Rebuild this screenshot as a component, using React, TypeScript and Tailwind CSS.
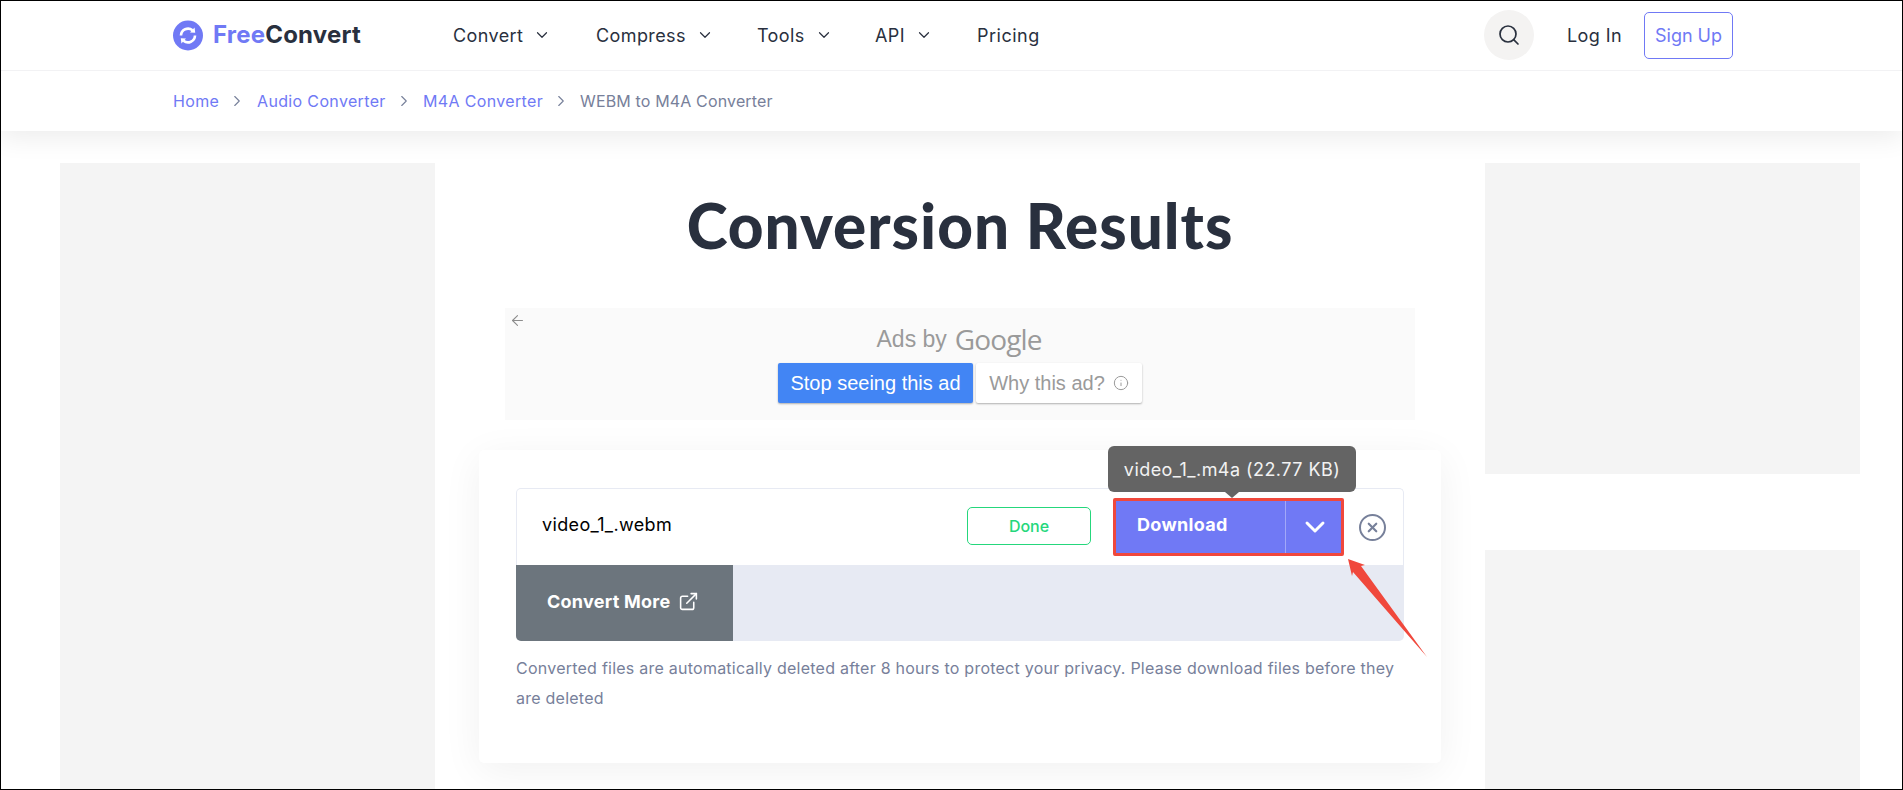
import { ChevronDown, ChevronRight, Search, ExternalLink, ArrowLeft, Info, X } from "lucide-react";

const navItems = [
  { label: "Convert", className: "w-[143px]" },
  { label: "Compress", className: "w-[161px]" },
  { label: "Tools", className: "w-[118px]" },
  { label: "API", className: "w-[102px]" },
];

const crumbs = [
  { label: "Home", className: "w-[84px]" },
  { label: "Audio Converter", className: "w-[166px]" },
  { label: "M4A Converter", className: "w-[157px]" },
];

function Logo() {
  return (
    <div className="flex items-center gap-[10px] w-[280px]">
      <svg width="30" height="31" viewBox="0 0 30 31" className="shrink-0">
        <circle cx="15" cy="15.5" r="15" fill="#7079f5" />
        <path d="M8 15.5a7 7 0 0 1 11.5-5.2" fill="none" stroke="#fff" strokeWidth="2.6" />
        <path d="M22 15.5a7 7 0 0 1-11.5 5.2" fill="none" stroke="#fff" strokeWidth="2.6" />
        <path d="M17 12.5l5.2.2-.6-5.2z" fill="#fff" />
        <path d="M13 18.5l-5.2-.2.6 5.2z" fill="#fff" />
      </svg>
      <span className="text-[24px] font-bold leading-none tracking-[0.2px]">
        <span className="text-[#7079f5]">Free</span>
        <span className="text-[#29303e]">Convert</span>
      </span>
    </div>
  );
}

function Header() {
  return (
    <header className="relative z-10 bg-white shadow-[0_8px_24px_rgba(0,0,0,0.07)]">
      <div className="h-[71px] flex items-center pl-[173px] border-b border-[#f2f2f4]">
        <Logo />
        {navItems.map((item) => (
          <div key={item.label} className={`flex items-center gap-[10px] text-[18px] tracking-[0.4px] text-[#29303e] ${item.className}`}>
            {item.label}
            <ChevronDown size={18} strokeWidth={1.6} />
          </div>
        ))}
        <div className="text-[18px] tracking-[0.5px] text-[#29303e]">Pricing</div>
        <div className="ml-auto flex items-center mr-[170px]">
          <div className="w-[50px] h-[50px] rounded-full bg-[#f4f3f2] flex items-center justify-center">
            <Search size={24} strokeWidth={1.7} className="text-[#29303e]" />
          </div>
          <span className="ml-[33px] text-[18px] tracking-[0.4px] text-[#29303e]">Log In</span>
          <div className="ml-[22px] w-[89px] h-[47px] rounded-[5px] border border-[#7079f5] text-[#7079f5] text-[18px] flex items-center justify-center">
            Sign Up
          </div>
        </div>
      </div>
      <div className="h-[60px] flex items-center pl-[173px] text-[16px] tracking-[0.35px] text-[#7079f5]">
        {crumbs.map((crumb) => (
          <div key={crumb.label} className={`flex items-center ${crumb.className}`}>
            <span>{crumb.label}</span>
            <ChevronRight size={18} strokeWidth={1.5} className="ml-[9px] text-[#77809a]" />
          </div>
        ))}
        <span className="text-[#77809a] tracking-[0.15px]">WEBM to M4A Converter</span>
      </div>
    </header>
  );
}

function AdNotice() {
  return (
    <div className="relative mx-[26px] h-[112px] bg-[#fafafa] flex flex-col items-center pt-[14px] font-['Liberation_Sans',sans-serif]">
      <ArrowLeft size={17} strokeWidth={1.5} className="absolute left-[4px] top-[4px] text-[#8c8c8c]" />
      <div className="h-[34px] flex items-center gap-[8px] pr-[2px] text-[#9a9a9a]">
        <span className="text-[23px]">Ads by</span>
        <span className="text-[28px] font-medium font-['Open_Sans',sans-serif] tracking-[-0.9px]">Google</span>
      </div>
      <div className="mt-[7px] flex gap-[3px] text-[20px]">
        <div className="w-[195px] h-[40px] rounded-[2px] bg-[#4285f4] text-white flex items-center justify-center shadow-[0_1px_2px_rgba(0,0,0,0.3)]">
          Stop seeing this ad
        </div>
        <div className="w-[166px] h-[40px] rounded-[2px] bg-white text-[#9a9a9a] flex items-center justify-center gap-[8px] shadow-[0_1px_2px_rgba(0,0,0,0.3)]">
          Why this ad?
          <Info size={16} strokeWidth={1.5} />
        </div>
      </div>
    </div>
  );
}

function ResultCard() {
  return (
    <div className="relative mt-[30px] h-[313px] rounded-[5px] bg-white px-[37px] pt-[38px] shadow-[0_8px_40px_rgba(0,0,0,0.06)]">
      <div className="rounded-t-[5px] border-x border-t border-[#e7eaf3]">
        <div className="h-[76px] flex items-center pl-[25px]">
          <span className="text-[18px] tracking-[0.35px] text-black mt-[-5px]">video_1_.webm</span>
          <div className="ml-auto flex items-center">
            <div className="w-[124px] h-[38px] mt-[-2px] rounded-[5px] border border-[#25d77c] text-[#25d77c] text-[16px] font-medium flex items-center justify-center">
              Done
            </div>
            <div className="relative ml-[22px] mr-[15px] w-[231px] h-[58px] border-[3px] border-[#f0483c] bg-[#7079f5] flex rounded-[2px]">
              <div className="flex-1 flex items-center pl-[21px] pb-[5px] text-white text-[18px] tracking-[0.3px] font-bold">Download</div>
              <div className="w-[56px] border-l border-[#a2a8f8] flex items-center justify-center text-white">
                <ChevronDown size={32} strokeWidth={2.2} className="ml-[3px]" />
              </div>
              <div className="absolute left-[-8px] top-[-55px] w-[248px] h-[46px] rounded-[6px] bg-[#646464] text-[#f2f2f2] text-[18px] tracking-[0.45px] flex items-center justify-center whitespace-nowrap">
                video_1_.m4a (22.77 KB)
                <div className="absolute left-1/2 -translate-x-1/2 bottom-[-6px] w-0 h-0 border-x-[7px] border-x-transparent border-t-[6px] border-t-[#646464]" />
              </div>
            </div>
            <div className="mr-[17px] w-[27px] h-[27px] rounded-full border-[2.5px] border-[#77809a] flex items-center justify-center text-[#77809a]">
              <X size={15} strokeWidth={3.5} />
            </div>
          </div>
        </div>
      </div>
      <div className="h-[76px] flex bg-[#e7eaf3] rounded-b-[5px] overflow-hidden">
        <div className="w-[217px] bg-[#6c757d] text-white flex items-center gap-[8px] pl-[31px] pb-[4px] text-[18px] tracking-[0.25px] font-bold">
          Convert More
          <ExternalLink size={21} strokeWidth={1.8} />
        </div>
      </div>
      <p className="mt-[12px] text-[16px] tracking-[0.24px] leading-[30px] text-[#77809a]">
        Converted files are automatically deleted after 8 hours to protect your privacy. Please download files before they are deleted
      </p>
      {/* red annotation arrow */}
      <svg width="90" height="110" viewBox="0 0 90 110" className="absolute left-[866px] top-[105px] pointer-events-none">
        <path d="M3 4L20 10L16 11L82 102L8 17L7 21Z" fill="#f0483c" />
      </svg>
    </div>
  );
}

export default function App() {
  return (
    <div className="relative h-[790px] overflow-hidden bg-white font-['Inter',sans-serif]">
      <Header />
      <main className="flex pl-[60px] pr-[43px] pt-[32px] gap-[44px]">
        <div className="w-[375px] h-[700px] shrink-0 bg-[#f4f4f4]" />
        <div className="flex-1 min-w-0">
          <div className="h-[145px] flex items-center justify-center pb-[22px]">
            <h1 className="text-[62px] font-black font-['Lato',sans-serif] leading-none text-[#29303e] tracking-[1px]">Conversion Results</h1>
          </div>
          <AdNotice />
          <ResultCard />
        </div>
        <div className="w-[375px] shrink-0 flex flex-col gap-[76px]">
          <div className="h-[311px] bg-[#f4f4f4]" />
          <div className="h-[300px] bg-[#f4f4f4]" />
        </div>
      </main>
      {/* screenshot frame */}
      <div className="absolute inset-0 z-20 border border-black pointer-events-none" />
    </div>
  );
}
